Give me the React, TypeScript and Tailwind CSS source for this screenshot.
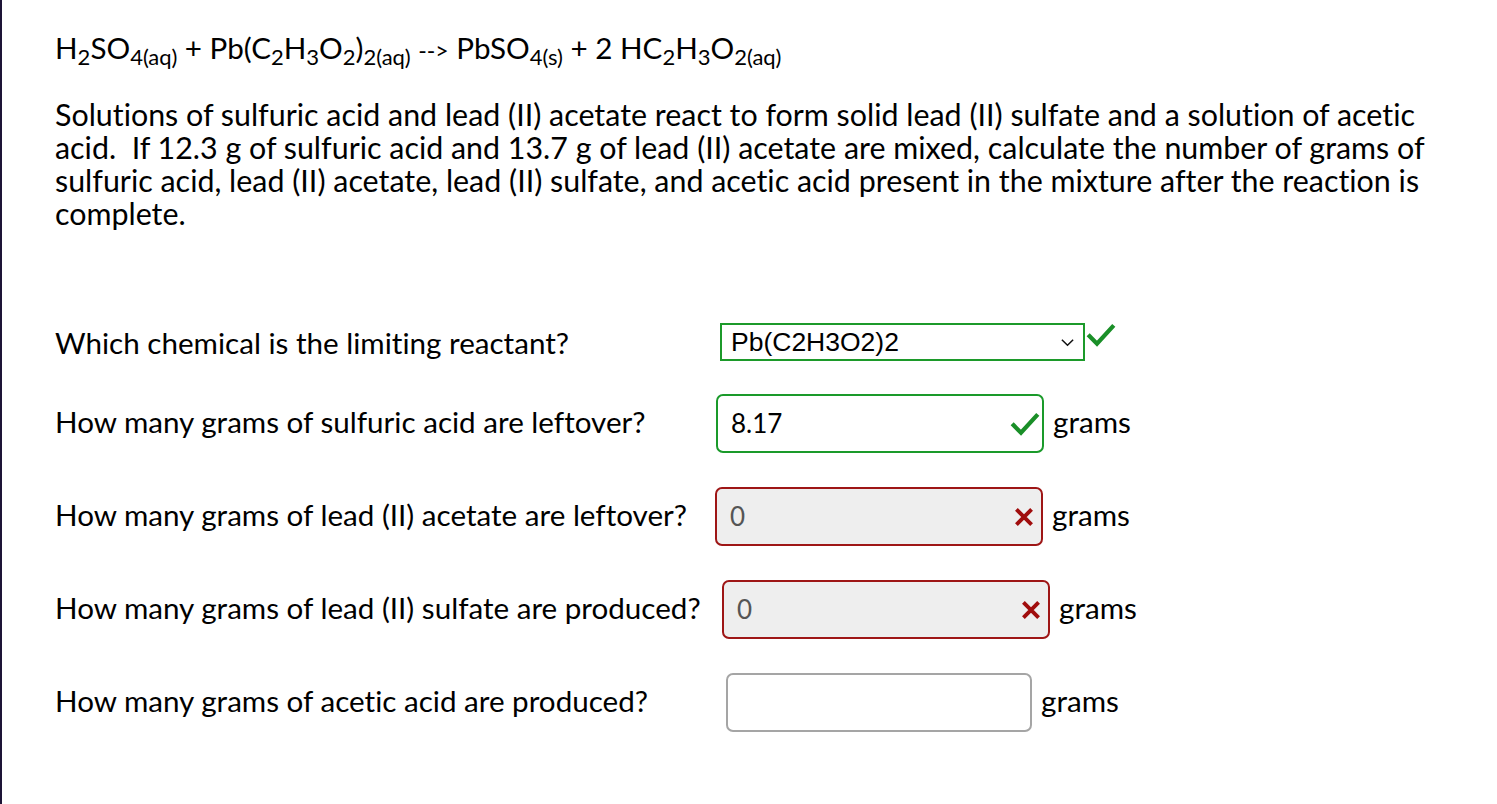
import React from 'react';

const Check = ({ className }: { className?: string }) => (
  <svg viewBox="0 0 24 24" className={className} fill="none" stroke="currentColor" strokeWidth={3.2} strokeLinecap="square">
    <path d="M3.5 13l5.5 5.5L20.5 6" />
  </svg>
);

const Cross = ({ className }: { className?: string }) => (
  <svg viewBox="0 0 24 24" className={className} fill="none" stroke="currentColor" strokeWidth={3.6}>
    <path d="M5 5l14 14M19 5L5 19" />
  </svg>
);

const Sub = ({ children }: { children: React.ReactNode }) => (
  <sub className="text-[22px] relative top-[6px] align-baseline">{children}</sub>
);

type Row = {
  label: string;
  labelW: string;
  value: string;
  state: 'ok' | 'bad' | 'none';
  boxW: string;
};

const rows: Row[] = [
  { label: 'How many grams of sulfuric acid are leftover?', labelW: 'w-[661px]', value: '8.17', state: 'ok', boxW: 'w-[328px]' },
  { label: 'How many grams of lead (II) acetate are leftover?', labelW: 'w-[660px]', value: '0', state: 'bad', boxW: 'w-[328px]' },
  { label: 'How many grams of lead (II) sulfate are produced?', labelW: 'w-[667px]', value: '0', state: 'bad', boxW: 'w-[328px]' },
  { label: 'How many grams of acetic acid are produced?', labelW: 'w-[671px]', value: '', state: 'none', boxW: 'w-[306px]' },
];

export default function App() {
  return (
    <div className="min-h-[804px] w-[1497px] bg-white border-l-2 border-[#1d1436] text-black font-['Lato',sans-serif] text-[29.6px] leading-[33px] [font-variant-ligatures:none]">
      <div className="pl-[53px] pt-[31px]">
        <p className="whitespace-nowrap">
          H<Sub>2</Sub>SO<Sub>4(aq)</Sub> + Pb(C<Sub>2</Sub>H<Sub>3</Sub>O<Sub>2</Sub>)<Sub>2(aq)</Sub>{' '}
          <span className="text-[23px]">--&gt;</span> PbSO<Sub>4(s)</Sub> + 2 HC<Sub>2</Sub>H<Sub>3</Sub>O<Sub>2(aq)</Sub>
        </p>

        <p className="mt-[31px] w-[1400px] text-[30.4px]">
          Solutions of sulfuric acid and lead (II) acetate react to form solid lead (II) sulfate and a solution of acetic
          acid.&nbsp; If 12.3 g of sulfuric acid and 13.7 g of lead (II) acetate are mixed, calculate the number of grams of
          sulfuric acid, lead (II) acetate, lead (II) sulfate, and acetic acid present in the mixture after the reaction is
          complete.
        </p>

        <div className="mt-[93px] flex items-center">
          <span className="w-[665px] shrink-0 whitespace-nowrap">Which chemical is the limiting reactant?</span>
          <div className="w-[365px] h-[38px] border-2 border-[#1c9a2a] flex items-center justify-between pl-[9px] pr-[8px] font-['Liberation_Sans',Arial,sans-serif] text-[26.5px]">
            <span>Pb(C2H3O2)2</span>
            <svg viewBox="0 0 16 16" className="w-[15px] h-[15px]" fill="none" stroke="#111" strokeWidth={1.6}>
              <path d="M2 5l6 6 6-6" />
            </svg>
          </div>
          <Check className="w-[32px] h-[32px] ml-[0px] -mt-[14px] text-[#1a8f28]" />
        </div>

        <div className="flex flex-col">
          {rows.map((r, i) => (
            <div key={i} className={`flex items-center ${i === 0 ? 'mt-[33px]' : 'mt-[34px]'}`}>
              <span className={`${r.labelW} shrink-0 whitespace-nowrap -mt-[4px]`}>{r.label}</span>
              <div
                className={`${r.boxW} h-[59px] rounded-[7px] border-2 flex items-center justify-between pl-[13px] pr-[1px] ${
                  r.state === 'ok'
                    ? 'border-[#1a9a2a] bg-white'
                    : r.state === 'bad'
                    ? 'border-[#9e1616] bg-[#eeeeee]'
                    : 'border-[#a5a5a5] bg-white'
                }`}
              >
                <span className={`text-[26px] ${r.state === 'bad' ? 'text-[#555]' : 'text-black'}`}>{r.value}</span>
                {r.state === 'ok' && <Check className="w-[32px] h-[32px] text-[#1a8f28]" />}
                {r.state === 'bad' && <Cross className="w-[26px] h-[26px] mr-[3px] text-[#a00d0d]" />}
              </div>
              <span className="ml-[9px] -mt-[4px]">grams</span>
            </div>
          ))}
        </div>
      </div>
    </div>
  );
}
